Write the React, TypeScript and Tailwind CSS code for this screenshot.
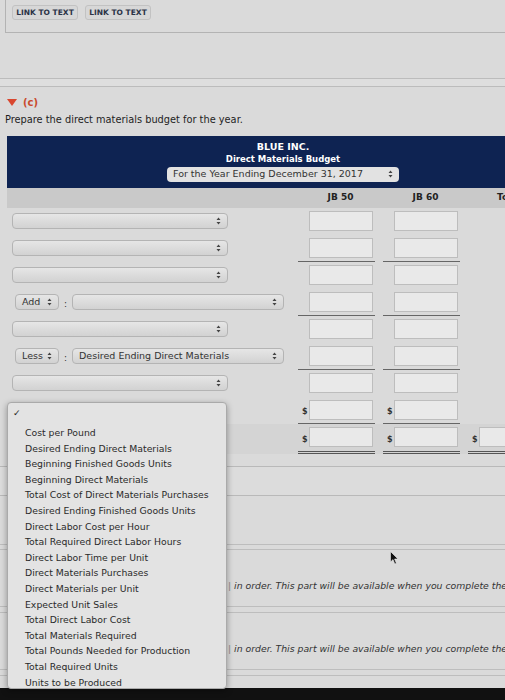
import React from "react";

const options = [
  "Cost per Pound",
  "Desired Ending Direct Materials",
  "Beginning Finished Goods Units",
  "Beginning Direct Materials",
  "Total Cost of Direct Materials Purchases",
  "Desired Ending Finished Goods Units",
  "Direct Labor Cost per Hour",
  "Total Required Direct Labor Hours",
  "Direct Labor Time per Unit",
  "Direct Materials Purchases",
  "Direct Materials per Unit",
  "Expected Unit Sales",
  "Total Direct Labor Cost",
  "Total Materials Required",
  "Total Pounds Needed for Production",
  "Total Required Units",
  "Units to be Produced",
];

function Arrows() {
  return (
    <svg width="5" height="8" viewBox="0 0 5 8" className="shrink-0">
      <path d="M2.5 0.5 L4.5 3 L0.5 3 Z M2.5 7.5 L4.5 5 L0.5 5 Z" fill="#444" />
    </svg>
  );
}

function Select({ width, label }: { width: string; label?: string }) {
  return (
    <div
      className={`${width} flex h-[16px] items-center justify-between rounded-[4px] border border-[#b4b4b4] bg-gradient-to-b from-[#e6e6e6] to-[#d2d2d2] px-[6px] text-[9.5px] text-[#333]`}
    >
      <span>{label ?? ""}</span>
      <Arrows />
    </div>
  );
}

function Cell({ line, dollar, doubleLine }: { line?: boolean; dollar?: boolean; doubleLine?: boolean }) {
  return (
    <div
      className={`flex h-full w-[77px] items-center gap-[2px] pl-[4px] ${
        doubleLine ? "border-b-[3px] border-double border-[#555]" : line ? "border-b border-[#666]" : ""
      }`}
    >
      <span className="w-[5px] pt-[5px] text-[8px] font-bold text-[#333]">{dollar ? "$" : ""}</span>
      <div className="h-[20px] w-[64px] border border-[#bdbdbd] bg-[#e9e9e9]" />
    </div>
  );
}

function Row({
  left,
  line,
  dollar,
  band,
}: {
  left?: React.ReactNode;
  line?: boolean;
  dollar?: boolean;
  band?: boolean;
}) {
  return (
    <div className={`flex items-stretch ${band ? "h-[30px] bg-[#d4d4d4]" : "h-[27px]"}`}>
      <div className="flex w-[291px] items-center pl-[5px]">{left}</div>
      <Cell line={line && !band} doubleLine={band} dollar={dollar} />
      <div className="w-[8px]" />
      <Cell line={line && !band} doubleLine={band} dollar={dollar} />
      <div className="w-[8px]" />
      {band ? <Cell doubleLine dollar /> : <div className="w-[77px]" />}
    </div>
  );
}

function OpRow({ op, label }: { op: string; label?: string }) {
  return (
    <div className="flex items-center">
      <div className="ml-[3px]">
        <Select width="w-[44px]" label={op} />
      </div>
      <span className="mx-[5px] mt-[6px] text-[9px] text-[#333]">:</span>
      <Select width="w-[212px]" label={label} />
    </div>
  );
}

function Notice() {
  return (
    <div className="h-[56px] overflow-hidden pl-[228px] pt-[30px] text-[9.3px] italic leading-[12px] text-[#333]">
      <span className="whitespace-nowrap">
        <span className="text-[#888]">|</span> in order. This part will be available when you complete the part above.
      </span>
    </div>
  );
}

export default function App() {
  return (
    <div
      className="relative h-[700px] w-[505px] overflow-hidden bg-[#dadada] text-[#222]"
      style={{ fontFamily: '"DejaVu Sans", Verdana, sans-serif' }}
    >
      <div className="ml-[5px] flex h-[33px] gap-[7px] border-b border-l border-[#b3b3b3] pl-[6px] pt-[5px]">
        {["LINK TO TEXT", "LINK TO TEXT"].map((t, i) => (
          <div
            key={i}
            className="flex h-[15px] w-[66px] items-center justify-center rounded-[3px] border border-[#c2c2c2] bg-[#d7d7d7] text-[7.5px] font-bold text-[#2b3346]"
          >
            {t}
          </div>
        ))}
      </div>

      <div className="mt-[45px] h-[9px] border-y border-[#bcbcbc] bg-[#dedede]" />

      <div className="ml-[7px] mt-[8px] flex items-center gap-[6px]">
        <svg width="10" height="7" viewBox="0 0 10 7">
          <path d="M0 0 H10 L5 7 Z" fill="#d9472f" />
        </svg>
        <span className="text-[10px] font-bold text-[#c94a2e]">(c)</span>
      </div>
      <p className="ml-[5px] mt-[3px] text-[9.8px] text-[#1e1e1e]">Prepare the direct materials budget for the year.</p>

      <div className="ml-[7px] mt-[8px] w-[552px]">
        <div className="flex h-[52px] flex-col items-center bg-[#0e2352] pt-[5px] text-white">
          <div className="text-[9.5px] font-bold leading-[12px]">BLUE INC.</div>
          <div className="text-[8.5px] font-bold leading-[12px]">Direct Materials Budget</div>
          <div className="mt-[2px] flex h-[15px] w-[232px] items-center justify-between rounded-[4px] bg-[#e2e2e2] px-[6px] text-[9.5px] text-[#333]">
            <span>For the Year Ending December 31, 2017</span>
            <Arrows />
          </div>
        </div>
        <div className="flex h-[20px] items-center bg-[#c9c9c9] text-[9px] font-bold text-[#222]">
          <div className="w-[291px]" />
          <div className="w-[77px] pl-[8px] text-center">JB 50</div>
          <div className="w-[8px]" />
          <div className="w-[77px] pl-[8px] text-center">JB 60</div>
          <div className="w-[8px]" />
          <div className="w-[77px] pl-[29px]">Total</div>
        </div>

        <Row left={<Select width="w-[216px]" />} />
        <Row left={<Select width="w-[216px]" />} line />
        <Row left={<Select width="w-[216px]" />} />
        <Row left={<OpRow op="Add" />} line />
        <Row left={<Select width="w-[216px]" />} />
        <Row left={<OpRow op="Less" label="Desired Ending Direct Materials" />} line />
        <Row left={<Select width="w-[216px]" />} />
        <Row dollar line />
        <Row band dollar />
      </div>

      <div className="mt-[12px] h-[30px] border-y border-[#b9b9b9] bg-[#dcdcdc]" />
      <div className="mt-[48px] h-[6px] border-y border-[#bdbdbd]" />
      <Notice />
      <div className="h-[7px] border-y border-[#bdbdbd]" />
      <Notice />
      <div className="h-[7px] border-y border-[#bdbdbd]" />
      <div className="absolute bottom-0 left-0 h-[12px] w-full bg-[#111]" />

      {/* open dropdown list */}
      <div className="absolute left-[7px] top-[402px] h-[287px] w-[220px] rounded-[4px] border border-[#aaa] bg-[#e3e3e3] shadow-[0_2px_6px_rgba(0,0,0,0.35)]">
        <div className="pl-[5px] pt-[3px] text-[9px] leading-[14px] text-[#222]">✓</div>
        <ul className="mt-[5px] pl-[17px] text-[9.3px] leading-[15.6px] text-[#2a2a2a]">
          {options.map((o) => (
            <li key={o} className="whitespace-nowrap">
              {o}
            </li>
          ))}
        </ul>
      </div>

      {/* mouse pointer */}
      <svg className="absolute left-[390px] top-[551px]" width="9" height="14" viewBox="0 0 9 14">
        <path d="M0.5 0.5 L0.5 11 L3 8.6 L4.8 13 L6.4 12.3 L4.6 8 L8 8 Z" fill="#111" stroke="#eee" strokeWidth="0.6" />
      </svg>
    </div>
  );
}
